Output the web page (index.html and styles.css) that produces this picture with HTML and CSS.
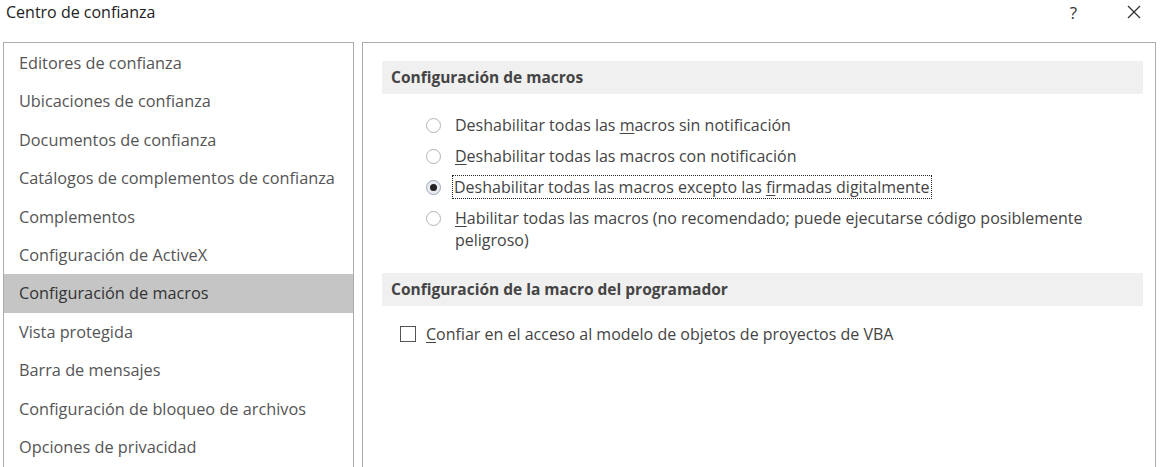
FILE: index.html
```html
<!DOCTYPE html>
<html lang="es">
<head>
  <meta charset="UTF-8">
  <title>Centro de confianza</title>
  <link rel="stylesheet" href="styles.css">
</head>
<body>
  <div class="dialog">
    <div class="titlebar">
      <div class="title">Centro de confianza</div>
      <div class="title-buttons">
        <span class="help">?</span>
        <span class="close">
          <svg width="14" height="14" viewBox="0 0 14 14"><path d="M1 1L13 13M13 1L1 13" stroke="#333" stroke-width="1.3" fill="none"/></svg>
        </span>
      </div>
    </div>
    <div class="panes">
      <div class="nav">
        <div class="nav-item">Editores de confianza</div>
        <div class="nav-item">Ubicaciones de confianza</div>
        <div class="nav-item">Documentos de confianza</div>
        <div class="nav-item">Catálogos de complementos de confianza</div>
        <div class="nav-item">Complementos</div>
        <div class="nav-item">Configuración de ActiveX</div>
        <div class="nav-item selected">Configuración de macros</div>
        <div class="nav-item">Vista protegida</div>
        <div class="nav-item">Barra de mensajes</div>
        <div class="nav-item">Configuración de bloqueo de archivos</div>
        <div class="nav-item">Opciones de privacidad</div>
      </div>
      <div class="content">
        <div class="section-title">Configuración de macros</div>
        <div class="options">
          <div class="option">
            <span class="radio"></span>
            <span class="label">Deshabilitar todas las <u>m</u>acros sin notificación</span>
          </div>
          <div class="option">
            <span class="radio"></span>
            <span class="label"><u>D</u>eshabilitar todas las macros con notificación</span>
          </div>
          <div class="option">
            <span class="radio checked"></span>
            <span class="label focused">Deshabilitar todas las macros excepto las <u>f</u>irmadas digitalmente</span>
          </div>
          <div class="option">
            <span class="radio"></span>
            <span class="label"><u>H</u>abilitar todas las macros (no recomendado; puede ejecutarse código posiblemente peligroso)</span>
          </div>
        </div>
        <div class="section-title second">Configuración de la macro del programador</div>
        <div class="check-row">
          <span class="checkbox"></span>
          <span class="label"><u>C</u>onfiar en el acceso al modelo de objetos de proyectos de VBA</span>
        </div>
      </div>
    </div>
  </div>
</body>
</html>
```

FILE: styles.css
```css
* {
  margin: 0;
  padding: 0;
  box-sizing: border-box;
}
body {
  font-family: "Open Sans", "Noto Sans", sans-serif;
  font-size: 16px;
  background: #fff;
  color: #444;
  width: 1160px;
  height: 467px;
  overflow: hidden;
}
.titlebar {
  height: 42px;
  display: flex;
  justify-content: space-between;
  align-items: flex-start;
  padding: 1px 0 0 6px;
}
.title {
  font-size: 16px;
  color: #222;
  line-height: 22px;
}
.title-buttons {
  display: flex;
  align-items: center;
  height: 22px;
}
.help {
  font-size: 17px;
  color: #333;
  margin-right: 50px;
}
.close {
  display: flex;
  margin-right: 19px;
}
.panes {
  display: flex;
  gap: 8px;
  padding-left: 3px;
  height: 440px;
}
.nav {
  width: 351px;
  border: 1px solid #acacac;
  border-bottom: none;
  padding-top: 1px;
}
.nav-item {
  height: 38.4px;
  line-height: 38.4px;
  padding-left: 15px;
  font-size: 16.3px;
  color: #555;
  white-space: nowrap;
}
.nav-item.selected {
  background: #c5c5c5;
  color: #333;
}
.content {
  width: 794px;
  border: 1px solid #acacac;
  border-bottom: none;
  padding: 18px 12px 0 19px;
}
.section-title {
  background: #f0f0f0;
  height: 33px;
  line-height: 33px;
  padding-left: 9px;
  font-weight: bold;
  font-size: 15.5px;
  color: #444;
}
.section-title.second {
  margin-top: 22px;
}
.options {
  padding: 20px 40px 0 44px;
}
.option {
  display: flex;
  align-items: flex-start;
  margin-bottom: 9px;
  line-height: 22px;
}
.radio {
  flex: none;
  width: 15px;
  height: 15px;
  border: 1px solid #b4b4b4;
  border-radius: 50%;
  margin-top: 4px;
  margin-right: 14px;
  display: flex;
  align-items: center;
  justify-content: center;
}
.radio.checked {
  border-color: #a0a8b8;
  background: #e8ecf2;
}
.radio.checked::after {
  content: "";
  width: 7px;
  height: 7px;
  border-radius: 50%;
  background: #222;
}
.label u {
  text-decoration-thickness: 1px;
  text-underline-offset: 2px;
}
.label.focused {
  outline: 1px dotted #222;
  padding: 0 1px;
  margin-left: -2px;
}
.check-row {
  display: flex;
  align-items: center;
  padding: 17px 0 0 18px;
}
.checkbox {
  width: 16px;
  height: 16px;
  border: 1px solid #555;
  margin-right: 10px;
  background: #fff;
}
```
